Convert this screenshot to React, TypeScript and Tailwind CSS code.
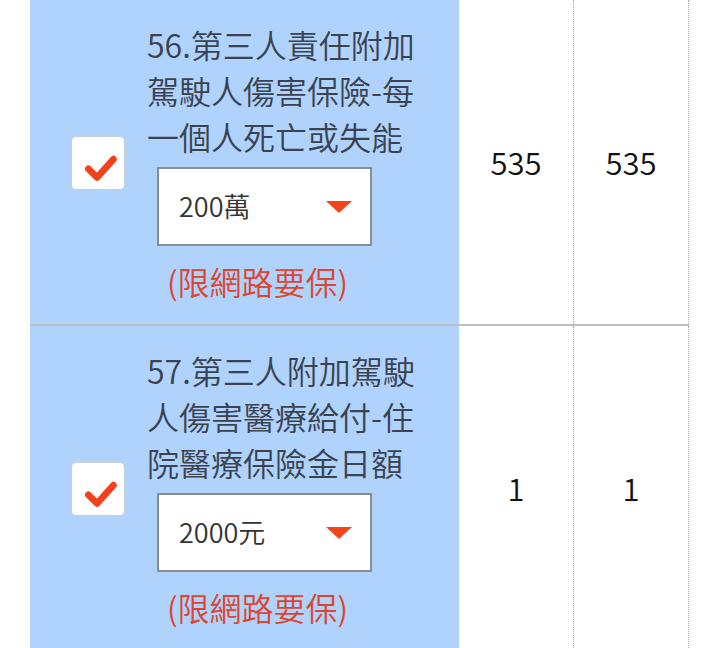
import React from "react";

type Row = { title: string; value: string; amount: string };

const rows: Row[] = [
  { title: "56.第三人責任附加駕駛人傷害保險-每一個人死亡或失能", value: "200萬", amount: "535" },
  { title: "57.第三人附加駕駛人傷害醫療給付-住院醫療保險金日額", value: "2000元", amount: "1" },
];

function Check() {
  return (
    <div className="w-[54px] h-[54px] shrink-0 bg-white rounded-[5px] border border-[#c9ced3] flex items-center justify-center">
      <svg width="54" height="54" viewBox="0 0 54 54">
        <path d="M17 33 L26 42 L43 23" fill="none" stroke="#f2421b" strokeWidth="7" strokeLinecap="round" strokeLinejoin="round" />
      </svg>
    </div>
  );
}

function RowView({ r }: { r: Row }) {
  return (
    <div className="flex border-b-2 border-[#bcbfc2]">
      <div className="w-[429px] bg-[#afd3fc] flex items-center pl-[41px] pt-[21px] pb-[20px]">
        <Check />
        <div className="ml-[22px]">
          <div className="w-[276px] text-[32px] leading-[46px] font-[350] text-[#3b4250]">{r.title}</div>
          <div className="ml-[10px] mt-[8px] w-[215px] h-[79px] bg-white border-2 border-[#8a8d90] flex items-center justify-between pl-[20px] pr-[18px]">
            <span className="text-[27px] font-[350] text-[#333]">{r.value}</span>
            <svg width="26" height="12" viewBox="0 0 26 12">
              <path d="M0 0 H26 L13 12 Z" fill="#f2451c" />
            </svg>
          </div>
          <div className="ml-[20px] mt-[12px] text-[32px] leading-[46px] font-[350] text-[#dc4530]">(限網路要保)</div>
        </div>
      </div>
      <div className="w-[115px] border-r border-dotted border-[#a9a9a9] flex items-center justify-center text-[31px] font-[350] text-[#111]">
        {r.amount}
      </div>
      <div className="w-[115px] border-r border-dotted border-[#a9a9a9] flex items-center justify-center text-[31px] font-[350] text-[#111]">
        {r.amount}
      </div>
    </div>
  );
}

export default function App() {
  return (
    <div
      className="w-[720px] h-[648px] overflow-hidden bg-white pl-[30px]"
      style={{ fontFamily: '"Noto Sans CJK TC", "Noto Sans", sans-serif' }}
    >
      <div className="w-[659px]">
        {rows.map((r) => (
          <RowView key={r.title} r={r} />
        ))}
      </div>
    </div>
  );
}
